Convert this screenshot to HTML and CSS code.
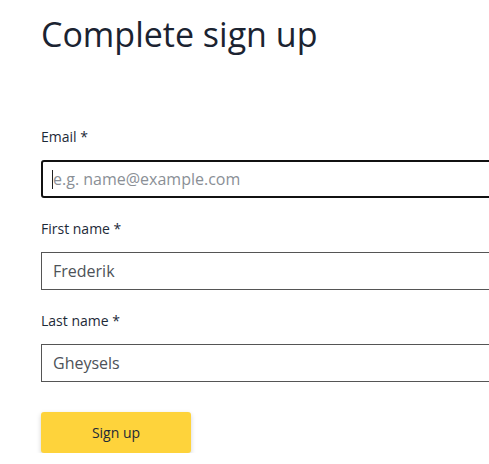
FILE: index.html
```html
<!DOCTYPE html>
<html lang="en">
<head>
<meta charset="utf-8">
<title>Complete sign up</title>
<link rel="stylesheet" href="styles.css">
</head>
<body>
<main class="page">
  <h1 class="title">Complete sign up</h1>
  <form class="form">
    <div class="field">
      <label class="label" for="email">Email *</label>
      <div class="input-wrap">
        <input class="input input-focus" id="email" type="email" placeholder="e.g. name@example.com">
        <span class="caret"></span>
      </div>
    </div>
    <div class="field">
      <label class="label" for="first">First name *</label>
      <input class="input" id="first" type="text" value="Frederik">
    </div>
    <div class="field">
      <label class="label" for="last">Last name *</label>
      <input class="input" id="last" type="text" value="Gheysels">
    </div>
    <button class="btn" type="button">Sign up</button>
  </form>
</main>
</body>
</html>
```

FILE: styles.css
```css
html, body {
  margin: 0;
  padding: 0;
  background: #ffffff;
  overflow: hidden;
}
body {
  font-family: "Open Sans", "Noto Sans", sans-serif;
  color: #1d2a38;
}
.page {
  padding: 13px 0 0 41px;
}
.title {
  margin: 0;
  font-size: 34px;
  font-weight: 400;
  line-height: 43px;
  color: #1b2331;
}
.form {
  margin-top: 71px;
  display: flex;
  flex-direction: column;
  align-items: flex-start;
}
.field {
  display: flex;
  flex-direction: column;
  margin-bottom: 21px;
}
.label {
  font-size: 14px;
  line-height: 20px;
  color: #1d2a38;
  margin-bottom: 13px;
}
.input-wrap {
  position: relative;
}
.input {
  box-sizing: border-box;
  width: 470px;
  height: 38px;
  border: 1px solid #555555;
  border-radius: 0;
  padding: 0 11px;
  font-family: "Open Sans", "Noto Sans", sans-serif;
  font-size: 16px;
  color: #4d5258;
  background: #fff;
  outline: none;
  display: block;
}
.input::placeholder {
  color: #8a8f96;
}
.input-focus {
  border: 2px solid #111111;
  border-radius: 3px;
  padding: 0 10px;
}
.caret {
  position: absolute;
  left: 11px;
  top: 10px;
  width: 1px;
  height: 19px;
  background: #222;
}
.btn {
  margin-top: 9px;
  width: 150px;
  height: 41px;
  border: none;
  border-radius: 3px;
  background: #fed33b;
  box-shadow: 0 2px 5px rgba(0, 0, 0, 0.18);
  font-family: "Open Sans", "Noto Sans", sans-serif;
  font-size: 14px;
  color: #1d2a38;
  cursor: pointer;
}
```
